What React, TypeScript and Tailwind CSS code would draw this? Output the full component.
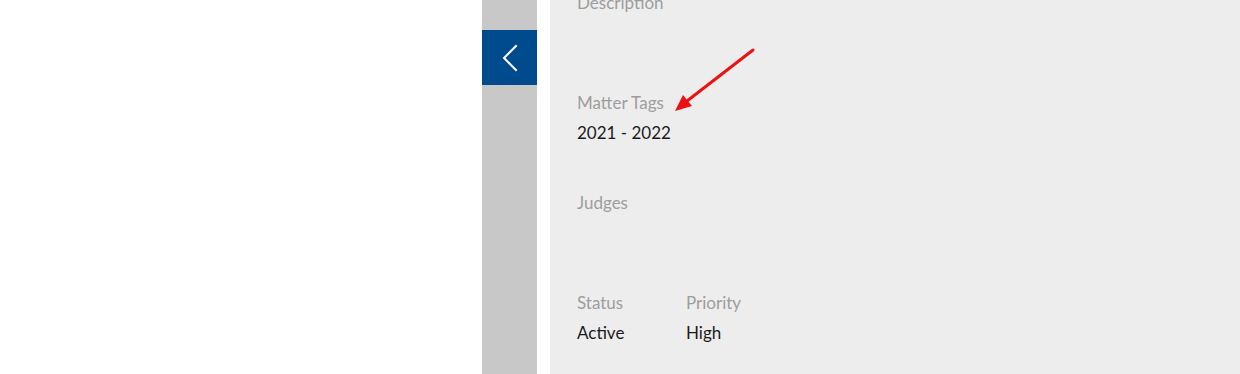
import React from "react";

function Field({ label, value }: { label: string; value?: string }) {
  return (
    <div className="h-[100px]">
      <div className="text-[17px] leading-[24px] text-[#9d9d9d]">{label}</div>
      {value ? (
        <div className="mt-[6px] text-[17px] leading-[24px] text-[#1b1b1b]">{value}</div>
      ) : null}
    </div>
  );
}

export default function App() {
  return (
    <div
      className="flex h-[374px] w-[1240px] overflow-hidden bg-white"
      style={{ fontFamily: "Lato, 'Open Sans', sans-serif" }}
    >
      <div className="w-[482px] shrink-0 bg-white" />
      <div className="w-[55px] shrink-0 bg-[#c8c8c8]">
        <button className="mt-[30px] flex h-[55px] w-[55px] items-center justify-center bg-[#004b8d]">
          <svg width="16" height="28" viewBox="0 0 16 28" fill="none">
            <path d="M14 2 L2 14 L14 26" stroke="white" strokeWidth="2" strokeLinecap="square" />
          </svg>
        </button>
      </div>
      <div className="w-[13px] shrink-0 bg-white" />
      <div className="relative flex-1 overflow-hidden bg-[#ededed] pl-[27px]">
        <div className="-mt-[9px]">
          <Field label="Description" />
          <Field label="Matter Tags" value="2021 - 2022" />
          <Field label="Judges" />
          <div className="flex">
            <div className="w-[109px]">
              <Field label="Status" value="Active" />
            </div>
            <div>
              <Field label="Priority" value="High" />
            </div>
          </div>
        </div>
        <svg
          className="absolute left-0 top-0"
          width="300"
          height="150"
          viewBox="0 0 300 150"
          fill="none"
        >
          <line x1="203" y1="50" x2="137" y2="101" stroke="#ee1111" strokeWidth="3" strokeLinecap="round" />
          <polygon points="125,111 133,95 142,106" fill="#ee1111" />
        </svg>
      </div>
    </div>
  );
}
